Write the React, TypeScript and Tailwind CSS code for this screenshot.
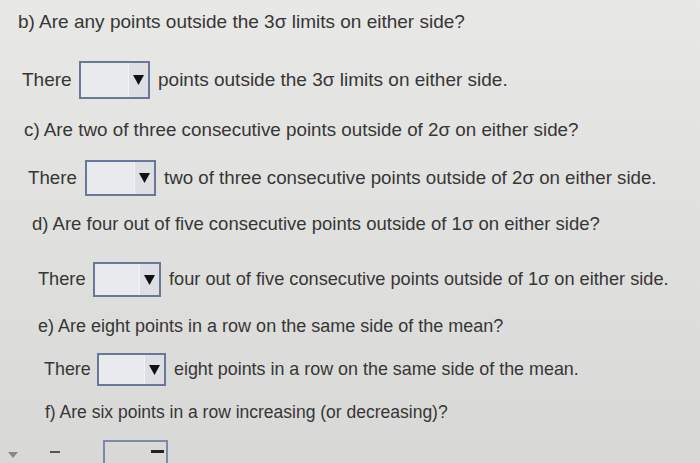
const Sigma = () => <span>σ</span>;

const Select = ({ w, h }: { w: number; h: number }) => (
  <div
    className="flex shrink-0 border-2 border-[#6a7898] bg-[#e9eaee]"
    style={{ width: w, height: h }}
  >
    <div className="flex-1" />
    <div className="flex w-[20px] items-center justify-center border-l border-[#f2f2f4] bg-[#dedfe4]">
      <svg width="11" height="10" viewBox="0 0 11 10">
        <path d="M0 0 H11 L5.5 10 Z" fill="#111" />
      </svg>
    </div>
  </div>
);

const Row = ({
  left,
  mt,
  tw,
  w,
  h,
  size,
  children,
}: {
  left: number;
  mt: number;
  tw: number;
  w: number;
  h: number;
  size: number;
  children: React.ReactNode;
}) => (
  <div
    className="flex items-center"
    style={{ marginLeft: left, marginTop: mt, height: h, fontSize: size }}
  >
    <span className="shrink-0" style={{ width: tw }}>There</span>
    <div className="ml-[7px]">
      <Select w={w} h={h} />
    </div>
    <span className="ml-[8px] whitespace-nowrap">{children}</span>
  </div>
);

const Question = ({
  left,
  mt,
  size,
  children,
}: {
  left: number;
  mt: number;
  size: number;
  children: React.ReactNode;
}) => (
  <div
    className="h-6 flex items-center whitespace-nowrap"
    style={{ marginLeft: left, marginTop: mt, fontSize: size }}
  >
    <span>{children}</span>
  </div>
);

export default function App() {
  return (
    <div className="w-[700px] h-[463px] overflow-hidden bg-gradient-to-b from-[#e8e8e6] to-[#d8d8d6] text-[#363636] font-['Liberation_Sans',Arial,sans-serif] pt-[10px]">
      <Question left={18} mt={0} size={19}>
        b) Are any points outside the 3<Sigma /> limits on either side?
      </Question>
      <Row left={22} mt={27} tw={50} w={71} h={38} size={19}>
        points outside the 3<Sigma /> limits on either side.
      </Row>
      <Question left={24} mt={19} size={18.8}>
        c) Are two of three consecutive points outside of 2<Sigma /> on either side?
      </Question>
      <Row left={28} mt={18} tw={50} w={71} h={36} size={18.7}>
        two of three consecutive points outside of 2<Sigma /> on either side.
      </Row>
      <Question left={32} mt={16} size={18.5}>
        d) Are four out of five consecutive points outside of 1<Sigma /> on either side?
      </Question>
      <Row left={38} mt={26} tw={48} w={68} h={35} size={18.2}>
        four out of five consecutive points outside of 1<Sigma /> on either side.
      </Row>
      <Question left={38} mt={17} size={18}>
        e) Are eight points in a row on the same side of the mean?
      </Question>
      <Row left={44} mt={15} tw={46} w={69} h={33} size={17.9}>
        eight points in a row on the same side of the mean.
      </Row>
      <Question left={45} mt={14} size={17.5}>
        f) Are six points in a row increasing (or decreasing)?
      </Question>
      <div className="flex items-start mt-[16px] h-[30px]">
        <svg className="ml-[8px] mt-[12px]" width="10" height="6" viewBox="0 0 10 6">
          <path d="M0 0 H10 L5 6 Z" fill="#888" />
        </svg>
        <div className="ml-[32px] mt-[11px] w-[10px] h-[2px] bg-[#555]" />
        <div className="ml-[43px] w-[65px] h-[30px] border-t-2 border-x-2 border-[#7d8aa6] flex justify-end">
          <div className="mt-[8px] mr-[2px] w-[13px] h-[3px] bg-[#222]" />
        </div>
      </div>
    </div>
  );
}
